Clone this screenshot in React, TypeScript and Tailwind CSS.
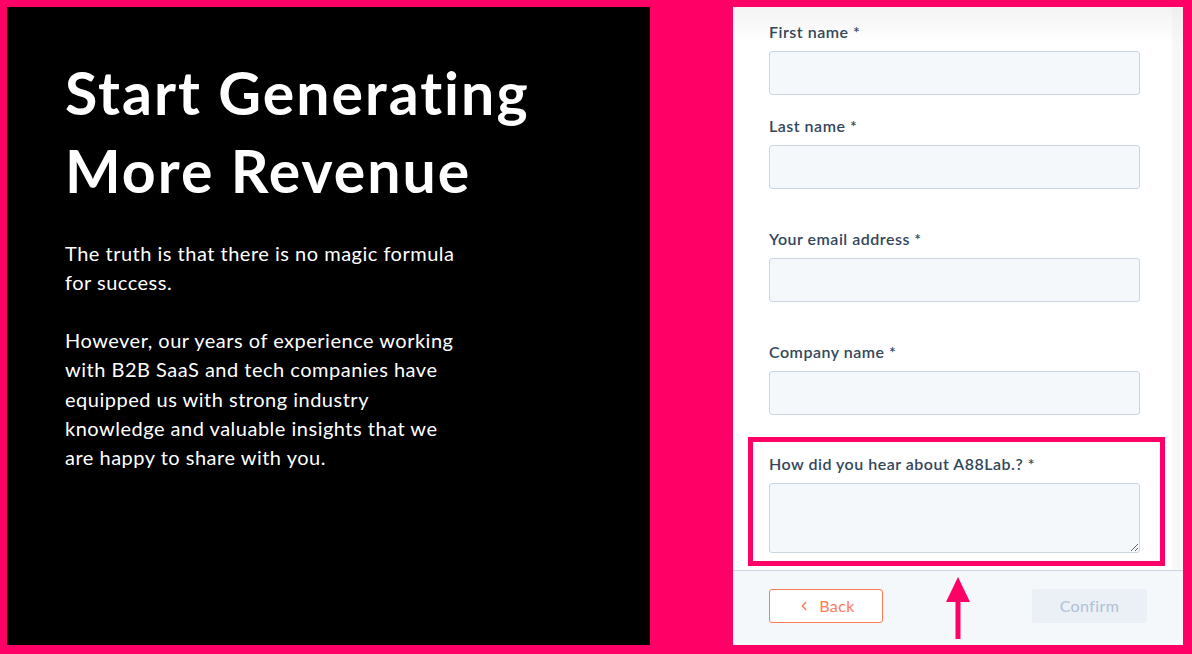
import { ChevronLeft } from 'lucide-react';

const fields = [
  { label: 'First name *', gap: 'mt-0' },
  { label: 'Last name *', gap: 'mt-[21px]' },
  { label: 'Your email address *', gap: 'mt-[40px]' },
  { label: 'Company name *', gap: 'mt-[40px]' },
];

const labelCls =
  "block h-5 text-[16px] leading-5 font-semibold text-[#33475b] font-['Lato',sans-serif] tracking-[0.5px]";

function Field({ label, className }: { label: string; className: string }) {
  return (
    <div className={className}>
      <label className={labelCls}>{label}</label>
      <input
        type="text"
        className="mt-[9px] block w-full h-[44px] rounded-[3px] border border-[#cbd6e2] bg-[#f5f8fa] px-3 outline-none"
      />
    </div>
  );
}

export default function App() {
  return (
    <div className="w-[1192px] h-[654px] bg-[#ff0066] pt-[7px] pl-[7px] pr-[9px] pb-[9px] flex overflow-hidden">
      {/* left intro panel */}
      <div className="w-[643px] h-full bg-black pl-[58px] pt-[47px]">
        <h1 className="text-white font-['Lato',sans-serif] font-bold text-[59px] leading-[78px] tracking-[2px]">
          Start Generating
          <br />
          More Revenue
        </h1>
        <div className="mt-[29px] w-[400px] text-white font-['Lato',sans-serif] text-[20px] leading-[29.4px] tracking-[0.5px] space-y-[28px]">
          <p>The truth is that there is no magic formula for success.</p>
          <p>
            However, our years of experience working with B2B SaaS and tech companies have equipped us
            with strong industry knowledge and valuable insights that we are happy to share with you.
          </p>
        </div>
      </div>

      {/* form panel */}
      <div className="ml-[83px] flex-1 h-full flex flex-col relative">
        <div className="flex-1 flex min-h-0">
          <div className="flex-1 bg-[linear-gradient(to_bottom,#f3f3f3,#ffffff_36px)] pl-[36px] pr-[32px] pt-[15px]">
            {fields.map((f) => (
              <Field key={f.label} label={f.label} className={f.gap} />
            ))}
            <div className="mt-[39px]">
              <label className={labelCls}>How did you hear about A88Lab.? *</label>
              <textarea className="mt-[9px] block w-full h-[70px] rounded-[3px] border border-[#cbd6e2] bg-[#f5f8fa] px-3 outline-none" />
            </div>
          </div>
          <div className="w-[11px] bg-[linear-gradient(to_bottom,#efefef,#f8f8f8_40px)]" />
        </div>

        <div className="h-[75px] shrink-0 border-t border-[#cbd6e2] bg-[#f5f8fa] px-[36px] pt-[18px] flex justify-between items-start">
          <button className="w-[114px] h-[34px] rounded-[3px] border border-[#ff7a59] bg-white flex items-center justify-center gap-[8px] text-[#ff7a59] text-[16px] tracking-[0.4px] font-['Lato',sans-serif]">
            <ChevronLeft className="w-[14px] h-[14px]" strokeWidth={2.5} />
            Back
          </button>
          <button className="w-[115px] h-[34px] rounded-[3px] bg-[#eaf0f6] text-[#b0c1d4] text-[16px] tracking-[0.4px] font-['Lato',sans-serif]">
            Confirm
          </button>
        </div>

        {/* annotation highlight */}
        <div className="absolute left-[15px] top-[430px] w-[417px] h-[129px] border-[5px] border-[#ff0066] pointer-events-none" />
        {/* annotation arrow */}
        <svg
          className="absolute left-[211px] top-[569px]"
          width="28"
          height="66"
          viewBox="0 0 28 66"
        >
          <polygon points="14,1 26,26 2,26" fill="#ff0066" />
          <rect x="11.5" y="24" width="5" height="39" fill="#ff0066" />
        </svg>
      </div>
    </div>
  );
}
